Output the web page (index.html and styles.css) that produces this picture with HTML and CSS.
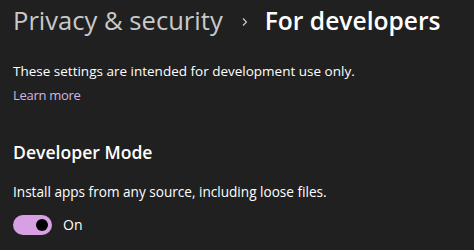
FILE: index.html
```html
<!DOCTYPE html>
<html>
<head>
<meta charset="utf-8">
<link rel="stylesheet" href="styles.css">
</head>
<body>
<div class="page">
  <header class="crumbs">
    <span class="parent">Privacy &amp; security</span>
    <svg class="chev" width="8" height="10" viewBox="0 0 8 10"><path d="M2 1.5 L5.5 5 L2 8.5" fill="none" stroke="#d0d0d0" stroke-width="1.1"/></svg>
    <span class="current">For developers</span>
  </header>
  <p class="desc">These settings are intended for development use only.</p>
  <a class="link">Learn more</a>
  <h2 class="title">Developer Mode</h2>
  <p class="desc2">Install apps from any source, including loose files.</p>
  <div class="toggle-row">
    <span class="toggle"><span class="knob"></span></span>
    <span class="state">On</span>
  </div>
</div>
</body>
</html>
```
FILE: styles.css
```css
html, body { margin: 0; padding: 0; background: #202020; }
body { width: 474px; height: 250px; overflow: hidden; font-family: "Open Sans", "Noto Sans", sans-serif; color: #ffffff; }
.page { padding: 0 0 0 13px; display: flex; flex-direction: column; align-items: flex-start; }
.crumbs { display: flex; align-items: center; height: 40px; font-weight: 500; }
.parent { color: #c9c9c9; font-size: 25.6px; }
.chev { margin: 4px 16px 0 18px; }
.current { color: #ffffff; font-weight: 600; font-size: 24.6px; }
.desc { margin: 22px 0 0 0; font-size: 13.5px; line-height: 18px; color: #ffffff; }
.link { margin-top: 6px; font-size: 13px; line-height: 18px; color: #d5b5e0; letter-spacing: -0.3px; }
.title { margin: 35px 0 0 0; font-size: 17.6px; line-height: 26px; font-weight: 600; color: #ffffff; }
.desc2 { margin: 18px 0 0 0; font-size: 13.6px; line-height: 18px; }
.toggle-row { display: flex; align-items: center; margin-top: 14px; gap: 11px; }
.toggle { width: 39px; height: 20px; border-radius: 10px; background: #d8a0e4; display: flex; align-items: center; justify-content: flex-end; padding-right: 4px; box-sizing: border-box; }
.knob { width: 12px; height: 12px; border-radius: 50%; background: #000; }
.state { font-size: 14px; line-height: 18px; }
```
